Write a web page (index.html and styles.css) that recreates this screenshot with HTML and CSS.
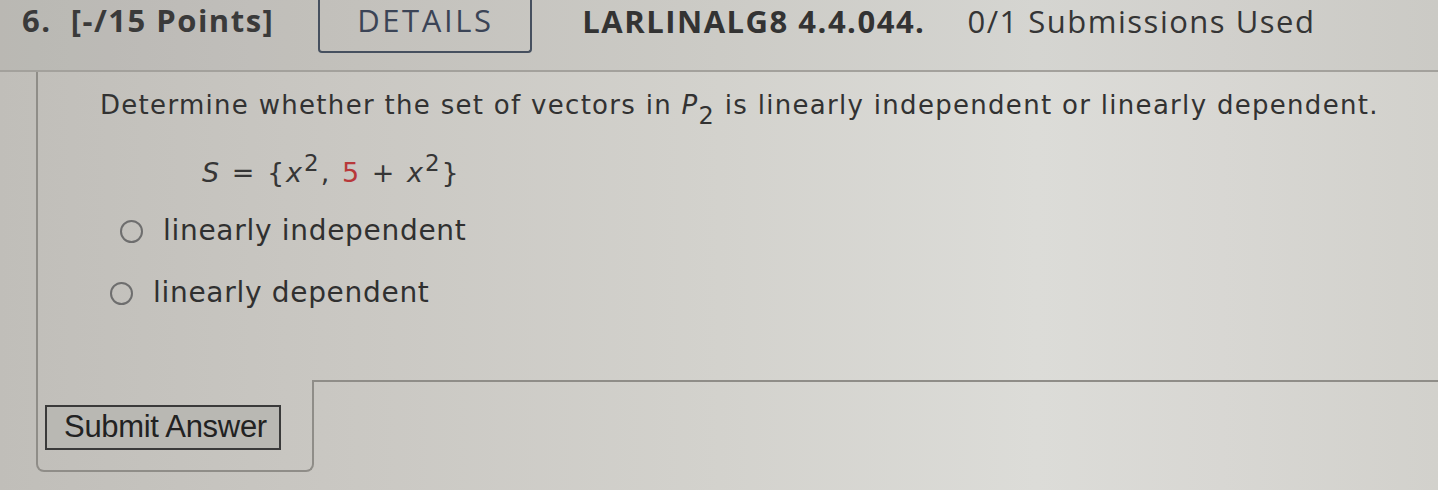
FILE: index.html
```html
<!DOCTYPE html>
<html>
<head>
<meta charset="utf-8">
<link rel="stylesheet" href="styles.css">
</head>
<body>
<div class="page">
  <div class="header">
    <span class="qnum">6.&nbsp; [-/15 Points]</span>
    <span class="details">DETAILS</span>
    <span class="code">LARLINALG8 4.4.044.</span>
    <span class="subs">0/1 Submissions Used</span>
  </div>
  <div class="question">
    <p class="prompt">Determine whether the set of vectors in <i>P</i><sub>2</sub> is linearly independent or linearly dependent.</p>
    <p class="set"><i>S</i> = {<i>x</i><sup>2</sup>, <span class="red">5</span> + <i>x</i><sup>2</sup>}</p>
    <label class="opt opt1"><span class="radio"></span>linearly independent</label>
    <label class="opt opt2"><span class="radio"></span>linearly dependent</label>
  </div>
  <div class="footer">
    <div class="submit-cell"><span class="btn">Submit Answer</span></div>
    <div class="rest"></div>
  </div>
</div>
</body>
</html>
```

FILE: styles.css
```css
html, body {
  margin: 0;
  padding: 0;
}
body {
  width: 1438px;
  height: 490px;
  overflow: hidden;
  background: linear-gradient(90deg, #c0beb9 0%, #cac8c3 25%, #d3d2cd 50%, #dcdcd8 72%, #d8d7d3 85%, #d2d1cc 100%);
  color: #353535;
}
.page {
  width: 1438px;
  height: 490px;
}
.header {
  height: 72px;
  display: flex;
  align-items: flex-start;
  border-bottom: 2px solid #a3a19c;
  font-family: "Open Sans", sans-serif;
  font-size: 31px;
  letter-spacing: 1.5px;
  line-height: 43px;
  background: rgba(0, 0, 0, 0.03);
  box-sizing: border-box;
  white-space: nowrap;
}
.qnum {
  margin-left: 22px;
  font-weight: 700;
  color: #3a3a3a;
  line-height: 40px;
}
.details {
  margin-left: 44px;
  width: 214px;
  height: 53px;
  box-sizing: border-box;
  border: 2px solid #46505f;
  border-top: none;
  border-radius: 0 0 4px 4px;
  text-align: center;
  color: #3b4456;
  line-height: 40px;
  letter-spacing: 2.6px;
}
.code {
  margin-left: 50px;
  font-weight: 700;
  color: #333;
}
.subs {
  margin-left: 42px;
  color: #353535;
}
.question {
  margin-left: 36px;
  border-left: 2px solid #8f8d88;
  height: 308px;
  box-sizing: border-box;
  padding-left: 62px;
  padding-top: 16px;
  font-family: "DejaVu Sans", Verdana, sans-serif;
}
.prompt {
  margin: 0;
  font-size: 26px;
  letter-spacing: 1.3px;
  line-height: 34px;
  color: #323232;
  white-space: nowrap;
}
.prompt sub {
  font-size: 24px;
  vertical-align: -10px;
  line-height: 0;
}
.set {
  margin: 34px 0 0 102px;
  font-size: 27px;
  letter-spacing: 2px;
  line-height: 34px;
  color: #363636;
}
.set sup {
  font-size: 23px;
  vertical-align: 11px;
  line-height: 0;
}
.red {
  color: #b8383a;
}
.opt {
  display: flex;
  align-items: center;
  font-size: 28px;
  letter-spacing: 0.7px;
  line-height: 36px;
  color: #303030;
}
.opt1 {
  margin-top: 23px;
  margin-left: 20px;
}
.opt2 {
  margin-top: 26px;
  margin-left: 10px;
}
.radio {
  width: 19px;
  height: 19px;
  border: 2.5px solid #6e6e6e;
  border-radius: 50%;
  margin-right: 20px;
  flex: none;
}
.footer {
  display: flex;
  margin-left: 36px;
}
.submit-cell {
  width: 278px;
  height: 92px;
  box-sizing: border-box;
  border-left: 2px solid #8f8d88;
  border-right: 2px solid #8f8d88;
  border-bottom: 2px solid #8f8d88;
  border-radius: 0 0 8px 8px;
  padding-top: 25px;
  padding-left: 7px;
}
.btn {
  display: inline-block;
  width: 236px;
  height: 45px;
  box-sizing: border-box;
  border: 2px solid #3a3a3a;
  background: #b9b8b3;
  font-family: "Liberation Sans", Arial, sans-serif;
  font-size: 31px;
  line-height: 40px;
  padding-left: 17px;
  color: #222;
  letter-spacing: -0.3px;
}
.rest {
  flex: 1;
  border-top: 2px solid #8f8d88;
}
```
